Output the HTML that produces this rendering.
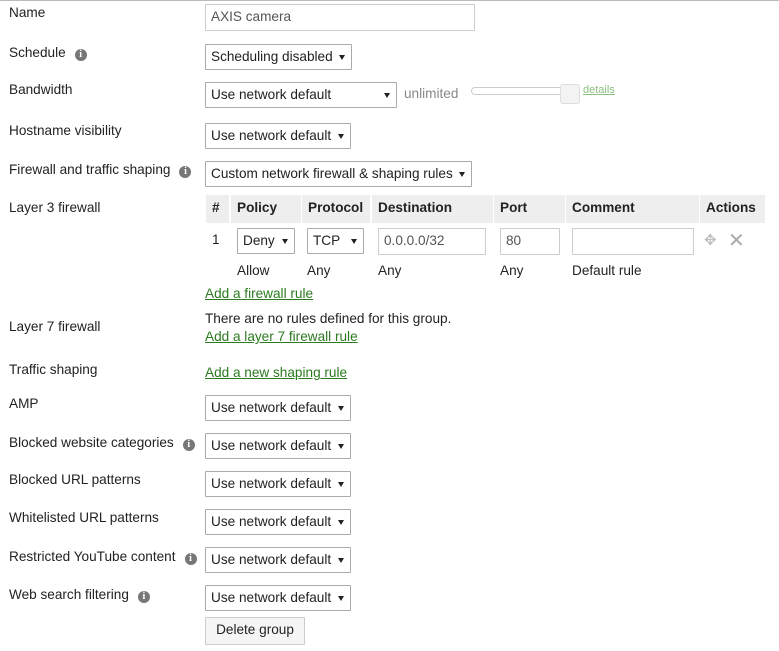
<!DOCTYPE html>
<html><head><meta charset="utf-8"><style>
body{margin:0;width:779px;height:651px;background:#fff;font-family:"Liberation Sans",Arial,sans-serif;font-size:13.6px;color:#222;position:relative;overflow:hidden;border-top:1px solid #bbb;box-sizing:border-box}
.a{position:absolute;white-space:nowrap}
.l{left:9px}
.box{position:absolute;border:1px solid #aaa;box-sizing:border-box;background:#fff;padding-left:5px;line-height:23px;white-space:nowrap;border-radius:1px}
.sel:after{content:"";position:absolute;right:6px;top:10px;border-left:3px solid transparent;border-right:3px solid transparent;border-top:5px solid #222}
.inp{border-color:#ccc;color:#555}
.i{display:inline-block;width:12px;height:12px;border-radius:50%;background:#777;color:#fff;font-size:10px;font-weight:bold;text-align:center;line-height:12px;font-family:"Liberation Serif",serif;vertical-align:0px;margin-left:9px}
.th{position:absolute;top:194px;height:28px;background:#eee;font-weight:bold;line-height:25px;padding-left:6px;box-sizing:border-box}
.g{color:#2b7a1f;text-decoration:underline}
</style></head><body>
<div class="a l" style="top:4px">Name</div>
<div class="box inp" style="left:205px;top:3px;width:270px;height:27px;line-height:24px">AXIS camera</div>

<div class="a l" style="top:44px">Schedule<span class="i">i</span></div>
<div class="box sel" style="left:205px;top:43px;width:147px;height:26px">Scheduling disabled</div>

<div class="a l" style="top:81px">Bandwidth</div>
<div class="box sel" style="left:205px;top:81px;width:192px;height:26px">Use network default</div>
<div class="a" style="left:404px;top:85px;color:#888">unlimited</div>
<div class="a" style="left:471px;top:86px;width:100px;height:6px;border:1px solid #ccc;border-radius:4px"></div>
<div class="a" style="left:560px;top:83px;width:18px;height:18px;border:1px solid #ddd;border-radius:3px;background:#f3f3f3"></div>
<div class="a" style="left:583px;top:83px;font-size:11px;color:#8bbf7f;text-decoration:underline">details</div>

<div class="a l" style="top:122px">Hostname visibility</div>
<div class="box sel" style="left:205px;top:122px;width:146px;height:26px">Use network default</div>

<div class="a l" style="top:161px">Firewall and traffic shaping<span class="i">i</span></div>
<div class="box sel" style="left:205px;top:160px;width:267px;height:26px">Custom network firewall &amp; shaping rules</div>

<div class="a l" style="top:199px">Layer 3 firewall</div>
<div class="th" style="left:206px;width:23px">#</div>
<div class="th" style="left:231px;width:70px">Policy</div>
<div class="th" style="left:302px;width:68px">Protocol</div>
<div class="th" style="left:372px;width:121px">Destination</div>
<div class="th" style="left:494px;width:71px">Port</div>
<div class="th" style="left:566px;width:133px">Comment</div>
<div class="th" style="left:700px;width:65px">Actions</div>
<div class="a" style="left:212px;top:231px">1</div>
<div class="box sel" style="left:237px;top:227px;width:58px;height:26px">Deny</div>
<div class="box sel" style="left:307px;top:227px;width:57px;height:26px">TCP</div>
<div class="box inp" style="left:378px;top:227px;width:108px;height:27px">0.0.0.0/32</div>
<div class="box inp" style="left:500px;top:227px;width:60px;height:27px">80</div>
<div class="box inp" style="left:572px;top:227px;width:122px;height:27px"></div>
<div class="a" style="left:704px;top:230px;color:#bbb;font-size:15px">✥</div>
<div class="a" style="left:728px;top:227px;color:#aaa;font-size:20px">✕</div>
<div class="a" style="left:237px;top:262px">Allow</div>
<div class="a" style="left:307px;top:262px">Any</div>
<div class="a" style="left:378px;top:262px">Any</div>
<div class="a" style="left:500px;top:262px">Any</div>
<div class="a" style="left:572px;top:262px">Default rule</div>
<div class="a g" style="left:205px;top:285px">Add a firewall rule</div>

<div class="a l" style="top:318px">Layer 7 firewall</div>
<div class="a" style="left:205px;top:310px">There are no rules defined for this group.</div>
<div class="a g" style="left:205px;top:328px">Add a layer 7 firewall rule</div>

<div class="a l" style="top:361px">Traffic shaping</div>
<div class="a g" style="left:205px;top:364px">Add a new shaping rule</div>

<div class="a l" style="top:395px">AMP</div>
<div class="box sel" style="left:205px;top:394px;width:146px;height:26px">Use network default</div>
<div class="a l" style="top:434px">Blocked website categories<span class="i">i</span></div>
<div class="box sel" style="left:205px;top:432px;width:146px;height:26px">Use network default</div>
<div class="a l" style="top:471px">Blocked URL patterns</div>
<div class="box sel" style="left:205px;top:470px;width:146px;height:26px">Use network default</div>
<div class="a l" style="top:509px">Whitelisted URL patterns</div>
<div class="box sel" style="left:205px;top:508px;width:146px;height:26px">Use network default</div>
<div class="a l" style="top:548px">Restricted YouTube content<span class="i">i</span></div>
<div class="box sel" style="left:205px;top:546px;width:146px;height:26px">Use network default</div>
<div class="a l" style="top:586px">Web search filtering<span class="i">i</span></div>
<div class="box sel" style="left:205px;top:584px;width:146px;height:26px">Use network default</div>
<div class="box" style="left:205px;top:616px;width:100px;height:28px;background:#f5f5f5;border-color:#ccc;padding-left:0;text-align:center;line-height:24px">Delete group</div>
</body></html>
